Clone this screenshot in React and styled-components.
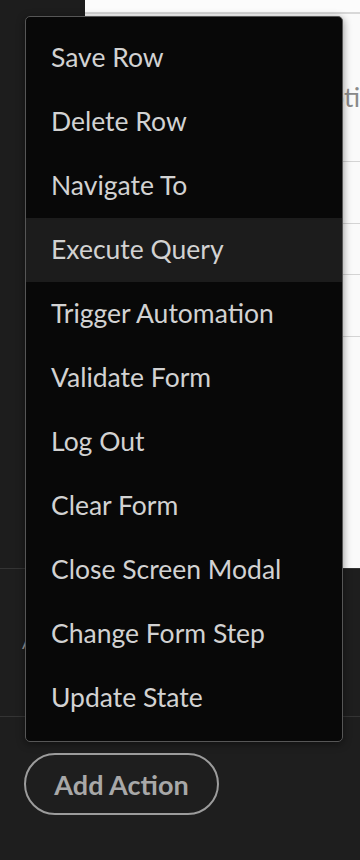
import React from "react";
import styled, { createGlobalStyle } from "styled-components";

const GlobalStyle = createGlobalStyle`
  html, body {
    margin: 0;
    padding: 0;
    background: #1e1e1e;
    font-family: Lato, "Open Sans", sans-serif;
  }
`;

const Page = styled.div`
  position: relative;
  width: 360px;
  height: 860px;
  overflow: hidden;
  display: flex;
  flex-direction: column;
  background: #1e1e1e;
`;

const Top = styled.div`
  display: grid;
  grid-template-columns: 85px 1fr;
  height: 568px;
`;

const Sidebar = styled.div`
  background: #1d1d1d;
`;

const Panel = styled.div`
  background: #fafafa;
  display: flex;
  flex-direction: column;
`;

const PanelHead = styled.div`
  height: 12px;
  background: #fcfcfc;
  border-bottom: 2px solid #d8d8d8;
`;

const PanelRow = styled.div`
  height: ${(p) => p.h}px;
  box-sizing: border-box;
  border-bottom: ${(p) => (p.last ? "none" : "1px solid #d4d4d4")};
  display: flex;
  align-items: center;
  padding: ${(p) => (p.label ? "18px 0 0 224px" : "0")};
  font-size: 26px;
  color: #8a8a8a;
  white-space: nowrap;
  flex: ${(p) => (p.last ? "1" : "none")};
`;

const Bottom = styled.div`
  flex: 1;
  border-top: 1px solid #343434;
  display: flex;
  flex-direction: column;
`;

const Section = styled.div`
  height: 148px;
  box-sizing: border-box;
  border-bottom: 1px solid #343434;
  display: flex;
  align-items: center;
  padding-left: 22px;
  font-size: 16px;
  color: #9a9a9a;
`;

const ButtonArea = styled.div`
  padding: 36px 0 0 24px;
`;

const AddButton = styled.button`
  width: 195px;
  height: 62px;
  box-sizing: border-box;
  border: 2px solid #9c9c9c;
  border-radius: 31px;
  background: transparent;
  color: #a8a8a8;
  font-family: Lato, "Open Sans", sans-serif;
  font-weight: 700;
  font-size: 27px;
  padding: 0;
  cursor: pointer;
`;

const Menu = styled.ul`
  position: absolute;
  top: 16px;
  left: 25px;
  width: 318px;
  box-sizing: border-box;
  margin: 0;
  padding: 9px 0 11px;
  list-style: none;
  background: #080808;
  border: 1px solid #565656;
  border-radius: 5px;
  box-shadow: 0 2px 8px rgba(0, 0, 0, 0.45);
`;

const MenuItem = styled.li`
  height: 64px;
  display: flex;
  align-items: center;
  padding: 0 0 2px 25px;
  box-sizing: border-box;
  font-size: 26.5px;
  color: #d2d2d2;
  background: ${(p) => (p.active ? "#1c1c1c" : "transparent")};
`;

const actions = [
  "Save Row",
  "Delete Row",
  "Navigate To",
  "Execute Query",
  "Trigger Automation",
  "Validate Form",
  "Log Out",
  "Clear Form",
  "Close Screen Modal",
  "Change Form Step",
  "Update State",
];

const App = () => {
  return (
    <Page>
      <GlobalStyle />
      <Top>
        <Sidebar />
        <Panel>
          <PanelHead />
          <PanelRow h={148} label>
            Options
          </PanelRow>
          <PanelRow h={62} />
          <PanelRow h={51} />
          <PanelRow h={62} />
          <PanelRow h={230} last />
        </Panel>
      </Top>
      <Bottom>
        <Section>Actions</Section>
        <ButtonArea>
          <AddButton>Add Action</AddButton>
        </ButtonArea>
      </Bottom>
      <Menu>
        {actions.map((a) => (
          <MenuItem key={a} active={a === "Execute Query"}>
            {a}
          </MenuItem>
        ))}
      </Menu>
    </Page>
  );
};

export default App;
